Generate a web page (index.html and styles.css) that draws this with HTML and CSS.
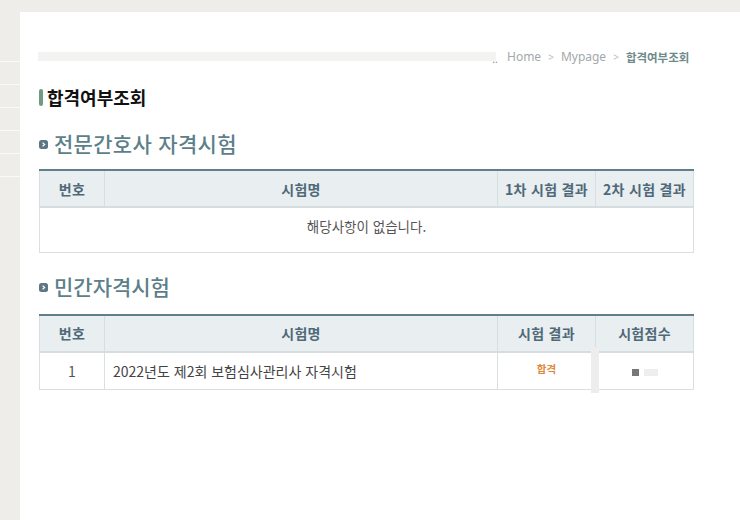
FILE: index.html
```html
<!DOCTYPE html>
<html lang="ko">
<head>
<meta charset="utf-8">
<link rel="stylesheet" href="styles.css">
</head>
<body>
<div class="frame">
  <aside class="side">
    <div class="side-top"></div>
    <div class="side-item"></div>
    <div class="side-item"></div>
    <div class="side-item"></div>
    <div class="side-item"></div>
    <div class="side-item"></div>
    <div class="side-item"></div>
  </aside>
  <main class="main">
    <div class="topline">
      <div class="graybar"></div>
      <span class="dots">..</span>
      <nav class="crumb">
        <span>Home</span><span class="sep">&gt;</span><span>Mypage</span><span class="sep">&gt;</span><span class="cur">합격여부조회</span>
      </nav>
    </div>
    <h1 class="page-title"><span class="bar"></span>합격여부조회</h1>

    <h2 class="sec"><span class="ico"><svg width="9" height="9" viewBox="0 0 9 9"><rect x="0" y="0" width="9" height="9" rx="2.5" fill="#5d7684"/><path d="M3.6 2.6 L5.6 4.5 L3.6 6.4" stroke="#fff" stroke-width="1.3" fill="none"/></svg></span>전문간호사 자격시험</h2>
    <table class="tbl">
      <colgroup><col class="c1"><col class="c2"><col class="c3"><col class="c4"></colgroup>
      <thead><tr><th>번호</th><th>시험명</th><th>1차 시험 결과</th><th>2차 시험 결과</th></tr></thead>
      <tbody><tr class="empty"><td colspan="4">해당사항이 없습니다.</td></tr></tbody>
    </table>

    <h2 class="sec sec2"><span class="ico"><svg width="9" height="9" viewBox="0 0 9 9"><rect x="0" y="0" width="9" height="9" rx="2.5" fill="#5d7684"/><path d="M3.6 2.6 L5.6 4.5 L3.6 6.4" stroke="#fff" stroke-width="1.3" fill="none"/></svg></span>민간자격시험</h2>
    <table class="tbl tbl2">
      <colgroup><col class="c1"><col class="c2"><col class="c3"><col class="c4"></colgroup>
      <thead><tr><th>번호</th><th>시험명</th><th>시험 결과</th><th>시험점수</th></tr></thead>
      <tbody><tr class="row"><td class="num">1</td><td class="name">2022년도 제2회 보험심사관리사 자격시험</td><td class="pass">합격</td><td class="score"><span class="sq"></span><span class="sq2"></span></td></tr></tbody>
    </table>
  </main>
</div>
</body>
</html>
```
FILE: styles.css
```css
html, body { margin: 0; padding: 0; }
body {
  background: #efedea;
  font-family: "Noto Sans CJK KR", "Noto Sans", sans-serif;
  width: 740px;
  height: 520px;
  overflow: hidden;
}
.frame {
  display: flex;
  padding-top: 12px;
  height: 508px;
}
.side {
  width: 20px;
  flex: none;
  display: flex;
  flex-direction: column;
}
.side-top { height: 49px; }
.side-item {
  height: 22px;
  border-top: 1px solid #fbfaf8;
}
.main {
  flex: 1;
  background: #fff;
  padding: 39px 47px 0 18px;
}
.topline {
  display: flex;
  align-items: center;
  height: 10px;
  white-space: nowrap;
}
.graybar {
  width: 458px;
  height: 9px;
  background: #f3f3f2;
  flex: none;
}
.dots {
  font-family: "Noto Sans", sans-serif;
  font-size: 10px;
  color: #888;
  margin-left: -12px;
  width: 22px;
  text-align: center;
  line-height: 10px;
  padding-top: 6px;
  flex: none;
}
.crumb {
  display: flex;
  align-items: center;
  flex: none;
  white-space: nowrap;
  font-family: "Noto Sans", sans-serif;
  font-size: 12px;
  color: #a3a8ab;
  margin-left: 1px;
  margin-top: 1px;
}
.crumb .sep { margin: 0 7px; font-size: 10px; color: #b9bdbf; }
.crumb .cur {
  font-family: "Noto Sans CJK KR", sans-serif;
  font-weight: 700;
  color: #6e8a8a;
  font-size: 11.5px;
  letter-spacing: 0;
}
.page-title {
  margin: 25px 0 0 1px;
  font-size: 18px;
  font-weight: 700;
  color: #111;
  display: flex;
  align-items: center;
  height: 22px;
  line-height: 22px;
}
.page-title .bar {
  display: inline-block;
  width: 4px;
  height: 17px;
  background: #6f9a84;
  border-radius: 2px;
  margin-right: 4px;
}
.sec {
  margin: 21px 0 0 0;
  font-size: 21px;
  font-weight: 500;
  color: #5d7f8a;
  display: flex;
  align-items: center;
  height: 28px;
  line-height: 28px;
  letter-spacing: 0.3px;
}
.sec .ico {
  display: inline-flex;
  width: 9px;
  height: 9px;
  margin-right: 6px;
  margin-left: 1px;
  margin-top: 3px;
}
.sec2 { margin-top: 19px; letter-spacing: 0; }
.tbl {
  width: 655px;
  border-collapse: collapse;
  margin-top: 12px;
  margin-left: 1px;
  border-top: 2px solid #607f8c;
  font-size: 14px;
}
.tbl2 { margin-top: 14px; }
.c1 { width: 65px; }
.c3 { width: 98px; }
.c4 { width: 98px; }
.tbl th {
  background: #e9eef1;
  color: #4f6978;
  font-weight: 700;
  height: 35px;
  padding: 0;
  border-left: 1px solid #d7dee2;
  border-right: 1px solid #d7dee2;
  border-bottom: 2px solid #d6dde1;
  letter-spacing: 0.3px;
}
.tbl td {
  border: 1px solid #dcdfe1;
  color: #555;
  padding: 0;
}
.empty td {
  height: 45px;
  text-align: center;
  font-size: 13.5px;
  color: #555;
  padding-bottom: 8px;
  box-sizing: border-box;
}
.row td { height: 32px; }
.row .num { text-align: center; color: #555; }
.row .name { padding-left: 8px; color: #444; font-size: 14px; letter-spacing: 0; }
.row .pass { text-align: center; color: #e0883a; font-weight: 700; font-size: 10.5px; padding-bottom: 4px; }
.row .score { text-align: center; position: relative; }
.row .score::before {
  content: "";
  position: absolute;
  left: -5px;
  top: -6px;
  bottom: -4px;
  width: 8px;
  background: #ededed;
}
.score .sq {
  display: inline-block;
  width: 7px;
  height: 7px;
  background: #777;
  vertical-align: middle;
}
.score .sq2 {
  display: inline-block;
  width: 14px;
  height: 7px;
  background: #eeeeee;
  margin-left: 5px;
  vertical-align: middle;
}
```
